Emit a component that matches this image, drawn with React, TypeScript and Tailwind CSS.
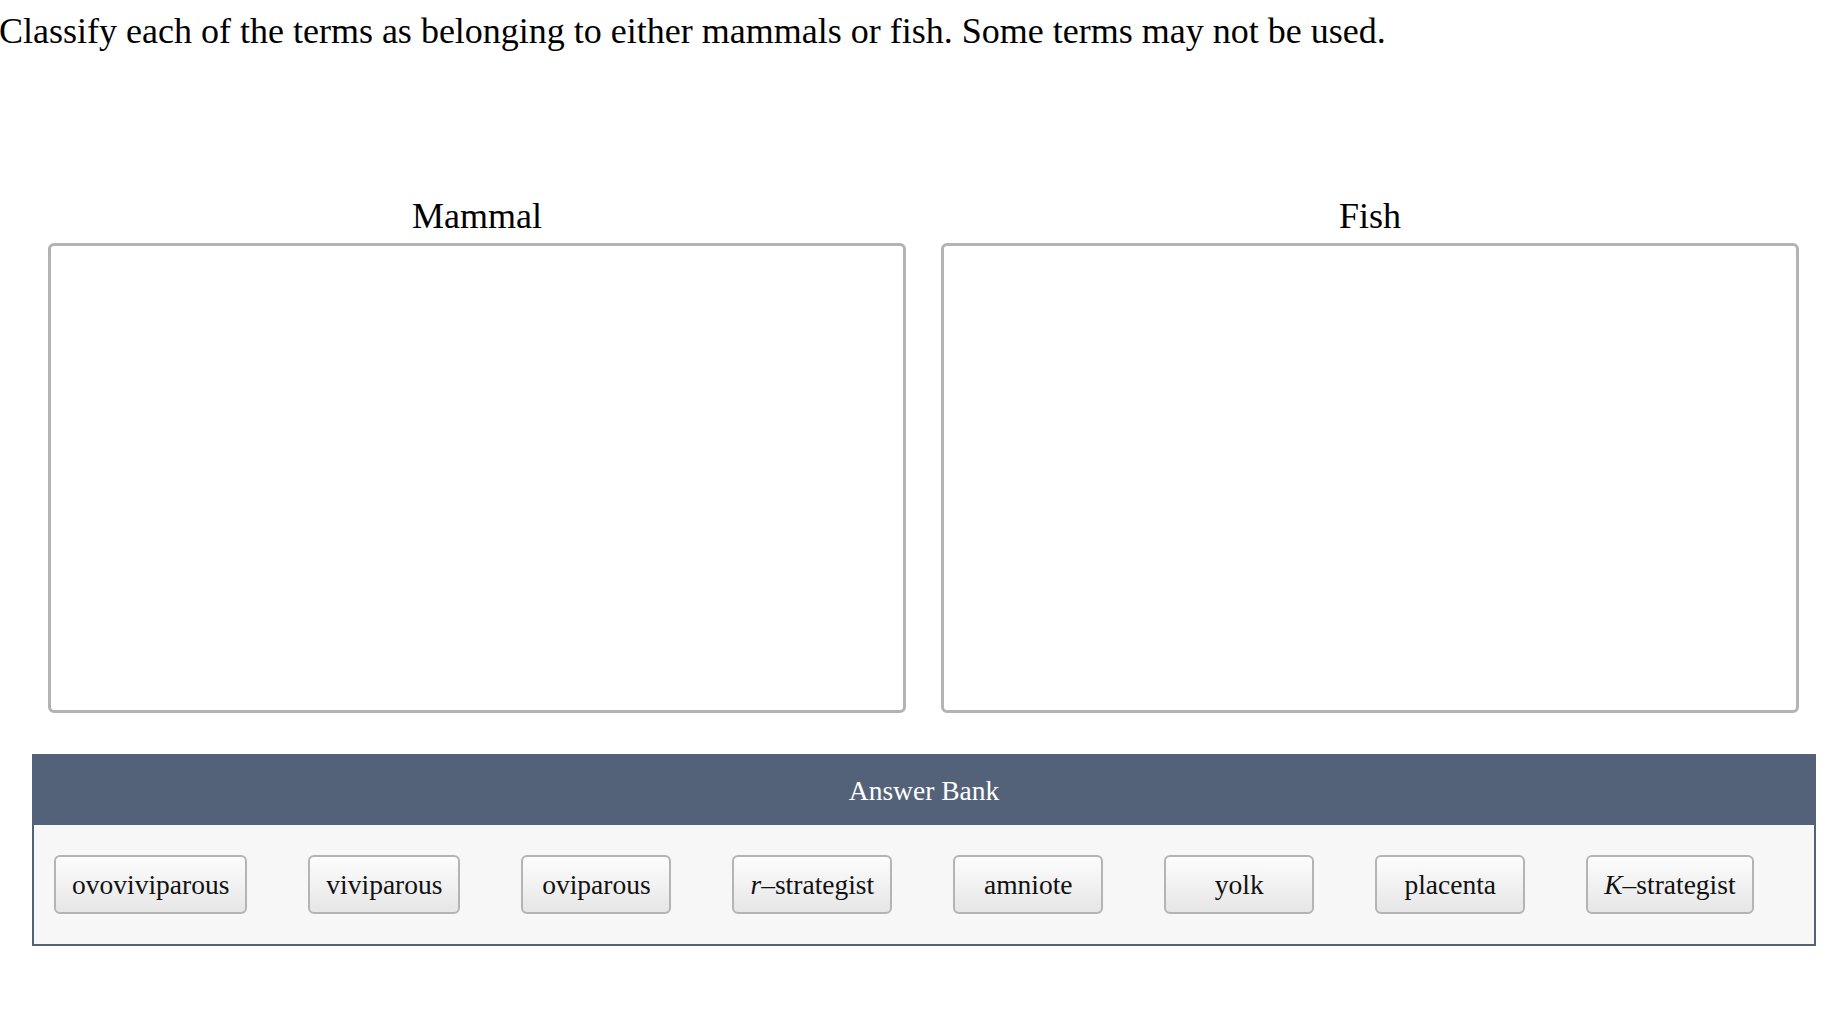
const TERMS: { key: string; label: React.ReactNode }[] = [
  { key: "ovoviviparous", label: "ovoviviparous" },
  { key: "viviparous", label: "viviparous" },
  { key: "oviparous", label: "oviparous" },
  { key: "r", label: (<><i>r</i>–strategist</>) },
  { key: "amniote", label: "amniote" },
  { key: "yolk", label: "yolk" },
  { key: "placenta", label: "placenta" },
  { key: "K", label: (<><i>K</i>–strategist</>) },
];

function DropZone({ title }: { title: string }) {
  return (
    <div className="flex flex-col w-[858px]">
      <div className="text-center text-[36px] leading-[41px] text-black">{title}</div>
      <div className="mt-[6px] h-[470px] rounded-[6px] border-[3px] border-[#b3b3b3] bg-white" />
    </div>
  );
}

export default function App() {
  return (
    <div className="min-h-screen w-[1834px] bg-white text-black font-['Liberation_Serif','Times_New_Roman',serif]">
      <p className="pt-[11px] -ml-[1px] text-[36px] leading-[41px]">
        Classify each of the terms as belonging to either mammals or fish. Some terms may not be used.
      </p>

      <div className="mt-[144px] ml-[48px] flex gap-[35px]">
        <DropZone title="Mammal" />
        <DropZone title="Fish" />
      </div>

      <div className="mt-[41px] ml-[32px] w-[1784px] border-2 border-[#536279] bg-[#f7f7f7]">
        <div className="h-[69px] bg-[#536279] flex items-center justify-center text-white text-[27.5px]">
          Answer Bank
        </div>
        <div className="flex items-center gap-[61px] pl-[20px] pt-[30px] pb-[30px]">
          {TERMS.map((t) => (
            <div
              key={t.key}
              className="h-[59px] min-w-[150px] px-[16px] flex items-center justify-center rounded-[6px] border-2 border-[#b4b4b4] bg-gradient-to-b from-[#fdfdfd] to-[#e6e6e6] text-[27.5px] text-[#111] select-none"
            >
              <span>{t.label}</span>
            </div>
          ))}
        </div>
      </div>
    </div>
  );
}
